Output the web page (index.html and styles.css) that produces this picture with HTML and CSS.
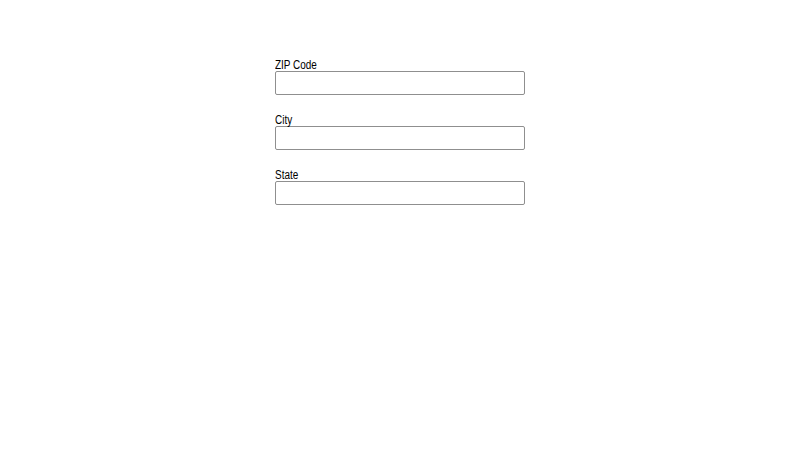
FILE: index.html
```html
<!DOCTYPE html>
<html>
<head>
<meta charset="utf-8">
<link rel="stylesheet" href="styles.css">
</head>
<body>
<form class="form">
  <div class="field">
    <label class="label" for="zip">ZIP Code</label>
    <input class="input" id="zip" type="text">
  </div>
  <div class="field">
    <label class="label" for="city">City</label>
    <input class="input" id="city" type="text">
  </div>
  <div class="field">
    <label class="label" for="state">State</label>
    <input class="input" id="state" type="text">
  </div>
</form>
</body>
</html>
```
FILE: styles.css
```css
html, body {
  margin: 0;
  padding: 0;
  background: #fff;
}
body {
  font-family: "Liberation Sans", Arial, sans-serif;
  font-size: 12px;
  color: #000;
}
.form {
  width: 250px;
  margin: 0 auto;
  padding-top: 59px;
  display: flex;
  flex-direction: column;
  gap: 19px;
}
.field {
  display: flex;
  flex-direction: column;
}
.label {
  display: block;
  line-height: 13px;
  height: 12px;
  transform: scaleX(0.83);
  transform-origin: left center;
}
.input {
  box-sizing: border-box;
  width: 250px;
  height: 24px;
  margin: 0;
  padding: 2px 4px;
  border: 1px solid #8f8f8f;
  border-radius: 2px;
  background: #fff;
  font: inherit;
}
```
